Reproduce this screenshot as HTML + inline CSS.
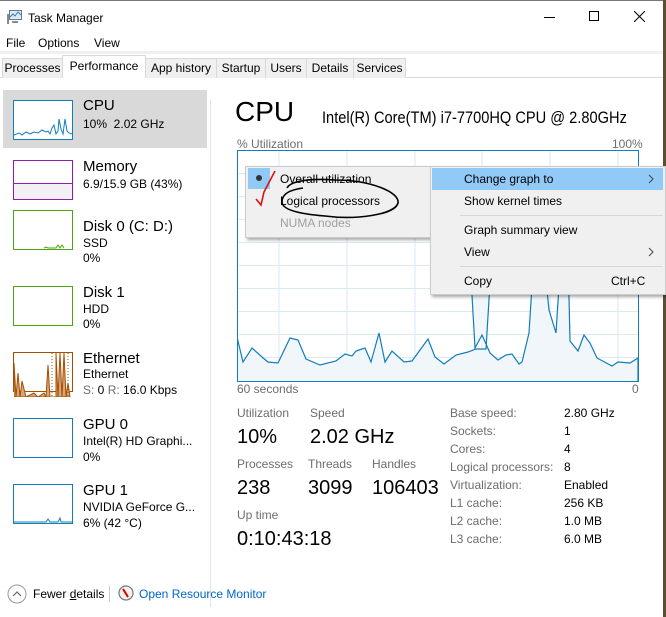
<!DOCTYPE html>
<html><head><meta charset="utf-8"><style>
*{margin:0;padding:0;box-sizing:border-box}
body{width:666px;height:617px;overflow:hidden;background:#fff;font-family:"Liberation Sans",sans-serif;color:#000;position:relative}
.a{position:absolute;white-space:nowrap}
.s12{font-size:12px}
.g{color:#6d6d6d}
.tab{position:absolute;top:58px;height:20px;border:1px solid #d9d9d9;border-bottom:none;background:#f0f0f0;font-size:12px;line-height:18px;text-align:center}
.th{position:absolute;left:13px;width:60px;height:40px;border:1px solid #117dbb;background:#fff}
.nm{position:absolute;left:83px;font-size:15px}
.sb{position:absolute;left:83px;font-size:12px;line-height:15px}
.lbl{position:absolute;font-size:12px;color:#6d6d6d}
.val{position:absolute;font-size:20px}
.mi{position:absolute;font-size:12px}
</style></head><body>
<div class="a" style="left:0;top:0;width:666px;height:1px;background:#777"></div>
<svg class="a" style="left:7px;top:10px" width="16" height="14"><rect x="2.5" y="0.5" width="12" height="9" fill="#dfe9f2" stroke="#6a7a8a"/><polyline points="3,7 6,4 8,6 11,2 14,5" fill="none" stroke="#3a78c0"/><rect x="0" y="4" width="2" height="10" fill="#8a8a8a"/><rect x="5" y="11" width="6" height="2" fill="#8a8a8a"/></svg>
<div class="a s12" style="left:28px;top:11px">Task Manager</div>
<div class="a" style="left:544px;top:17px;width:11px;height:1px;background:#000"></div>
<div class="a" style="left:589px;top:11px;width:10px;height:10px;border:1px solid #000"></div>
<svg class="a" style="left:634px;top:11px" width="11" height="11"><path d="M0 0L11 11M11 0L0 11" stroke="#000" stroke-width="1"/></svg>
<div class="a s12" style="left:6px;top:36px">File</div>
<div class="a s12" style="left:38px;top:36px">Options</div>
<div class="a s12" style="left:94px;top:36px">View</div>
<div class="a" style="left:0;top:51px;width:666px;height:3px;background:#f0f0f0"></div>
<div class="a" style="left:0;top:77px;width:663px;height:1px;background:#d9d9d9"></div>
<div class="tab" style="left:2px;width:61px">Processes</div>
<div class="tab" style="left:62px;width:84px;top:55px;height:23px;background:#fff;z-index:2;line-height:20px">Performance</div>
<div class="tab" style="left:145px;width:72px">App history</div>
<div class="tab" style="left:216px;width:50px">Startup</div>
<div class="tab" style="left:265px;width:42px">Users</div>
<div class="tab" style="left:306px;width:48px">Details</div>
<div class="tab" style="left:353px;width:53px">Services</div>
<div class="a" style="left:3px;top:90px;width:204px;height:58px;background:#d9d9d9"></div>
<div class="a" style="left:210px;top:100px;width:1px;height:507px;background:#e3e3e3"></div>
<div class="th" style="top:100px"><svg width="58" height="38" style="position:absolute;left:0;top:0"><polyline points="0,34 5,32 8,34 12,31 16,33 20,31 24,32 28,29 32,31 34,30 36,33 38,27 40,24 42,33 44,30 45,18 47,28 49,33 51,18 53,30 55,32 58,33" fill="none" stroke="#117dbb"/></svg></div>
<div class="nm" style="top:97px">CPU</div>
<div class="sb" style="top:117px">10%&nbsp; 2.02 GHz</div>
<div class="th" style="top:160px;border-color:#8e1dac"><div style="position:absolute;left:0;top:22px;width:58px;height:16px;background:#f2f0f4;border-top:1px solid #8e1dac"></div></div>
<div class="nm" style="top:158px">Memory</div>
<div class="sb" style="top:177px">6.9/15.9 GB (43%)</div>
<div class="th" style="top:210px;border-color:#4da60c"><svg width="58" height="38" style="position:absolute"><polyline points="30,37 32,36 34,37 42,37 44,34 46,37 48,34 50,37" fill="none" stroke="#4da60c"/></svg></div>
<div class="nm" style="top:218px">Disk 0 (C: D:)</div>
<div class="sb" style="top:236px">SSD</div>
<div class="sb" style="top:251px">0%</div>
<div class="th" style="top:286px;border-color:#4da60c"></div>
<div class="nm" style="top:284px">Disk 1</div>
<div class="sb" style="top:302px">HDD</div>
<div class="sb" style="top:317px">0%</div>
<div class="th" style="top:352px;border-color:#a74f01"><svg width="58" height="44" style="position:absolute"><path d="M0 44L0 10L2 44 4 20 6 44 8 28 10 36 12 44 20 40 24 44 30 40 32 44 34 12 36 44 42 44 42 0 44 44 46 0 48 44 50 0 52 44 54 30 56 44Z" fill="#d7a57a" stroke="#a74f01"/><path d="M38 0V44M54 0V44" stroke="#a74f01" stroke-dasharray="1,2"/></svg></div>
<div class="nm" style="top:350px">Ethernet</div>
<div class="sb" style="top:367px">Ethernet</div>
<div class="sb" style="top:383px"><span class="g">S:</span> 0 <span class="g">R:</span> 16.0 Kbps</div>
<div class="th" style="top:418px"></div>
<div class="nm" style="top:416px">GPU 0</div>
<div class="sb" style="top:434px">Intel(R) HD Graphi...</div>
<div class="sb" style="top:450px">0%</div>
<div class="th" style="top:484px"><svg width="58" height="38" style="position:absolute"><polyline points="0,37 32,37 34,34 36,37 44,37 46,33 47,37 58,37" fill="none" stroke="#117dbb"/></svg></div>
<div class="nm" style="top:482px">GPU 1</div>
<div class="sb" style="top:500px">NVIDIA GeForce G...</div>
<div class="sb" style="top:516px">6% (42 °C)</div>
<div class="a" style="left:235px;top:96px;font-size:28px">CPU</div>
<div class="a" style="left:322px;top:108px;font-size:17px;transform:scaleX(0.86);transform-origin:0 0">Intel(R) Core(TM) i7-7700HQ CPU @ 2.80GHz</div>
<div class="a s12 g" style="left:237px;top:137px">% Utilization</div>
<div class="a s12 g" style="left:612px;top:137px">100%</div>
<svg class="a" style="left:237px;top:150px" width="402" height="232">
<g stroke="#d9eaf4" stroke-width="1">
<path d="M42 0V232M110 0V232M178 0V232M245 0V232M313 0V232M381 0V232"/>
<path d="M0 23.5H402M0 46.5H402M0 69.5H402M0 92.5H402M0 115.5H402M0 138.5H402M0 161.5H402M0 184.5H402M0 207.5H402"/>
</g>
<path d="M0 187L6 212 15 198 25 207 31 212 41 213 53 188 61 190 69 209 83 215 99 211 108 204 115 206 119 201 128 198 134 212 142 183 148 212 155 201 167 212 175 211 191 189 198 207 207 214 219 205 231 202 239 199 249 199 255 100 229 40 238 198 245 185 253 203 261 210 269 205 275 204 282 214 285 212 292 183 296 120 300 60 308 120 312 160 319 183 323 120 330 60 333 191 341 201 347 185 353 193 360 208 375 216 381 212 393 213 401 208 401 232 0 232Z" fill="#f1f6fa" stroke="#117dbb" stroke-width="1.2"/>
<rect x="0.5" y="0.5" width="401" height="231" fill="none" stroke="#117dbb"/>
</svg>
<div class="a s12 g" style="left:237px;top:382px">60 seconds</div>
<div class="a s12 g" style="left:632px;top:382px">0</div>
<div class="lbl" style="left:237px;top:406px">Utilization</div>
<div class="lbl" style="left:310px;top:406px">Speed</div>
<div class="val" style="left:237px;top:426px">10%</div>
<div class="val" style="left:310px;top:426px">2.02 GHz</div>
<div class="lbl" style="left:237px;top:457px">Processes</div>
<div class="lbl" style="left:308px;top:457px">Threads</div>
<div class="lbl" style="left:372px;top:457px">Handles</div>
<div class="val" style="left:237px;top:477px">238</div>
<div class="val" style="left:308px;top:477px">3099</div>
<div class="val" style="left:372px;top:477px">106403</div>
<div class="lbl" style="left:237px;top:508px">Up time</div>
<div class="val" style="left:237px;top:528px">0:10:43:18</div>
<div class="lbl" style="left:450px;top:404px;line-height:18px">Base speed:<br>Sockets:<br>Cores:<br>Logical processors:<br>Virtualization:<br>L1 cache:<br>L2 cache:<br>L3 cache:</div>
<div class="a s12" style="left:564px;top:404px;line-height:18px">2.80 GHz<br>1<br>4<br>8<br>Enabled<br>256 KB<br>1.0 MB<br>6.0 MB</div>
<svg class="a" style="left:7px;top:584px" width="20" height="20"><circle cx="10" cy="10" r="9" fill="none" stroke="#999"/><path d="M6 12L10 8 14 12" fill="none" stroke="#666" stroke-width="1.2"/></svg>
<div class="a s12" style="left:33px;top:587px">Fewer <u>d</u>etails</div>
<div class="a" style="left:109px;top:586px;width:1px;height:16px;background:#ccc"></div>
<svg class="a" style="left:118px;top:585px" width="16" height="16"><circle cx="8" cy="8" r="7" fill="#f4f0ec" stroke="#777" stroke-width="1.2"/><path d="M5 4L10 12" stroke="#c00" stroke-width="2"/></svg>
<div class="a s12" style="left:139px;top:587px;color:#0066cc">Open Resource Monitor</div>
<div class="a" style="left:663px;top:0;width:3px;height:617px;background:#5a5030"></div>
<div class="a" style="left:245px;top:166px;width:188px;height:72px;background:#f0f0f0;border:1px solid #ccc;box-shadow:2px 2px 3px rgba(0,0,0,.35)"></div>
<div class="a" style="left:248px;top:168px;width:22px;height:21px;background:#91c9f7"></div>
<div class="a" style="left:256px;top:175px;width:6px;height:6px;border-radius:50%;background:#333"></div>
<div class="mi" style="left:280px;top:172px">Overall utilization</div>
<div class="mi" style="left:280px;top:194px">Logical processors</div>
<div class="mi" style="left:280px;top:216px;color:#a0a0a0">NUMA nodes</div>
<div class="a" style="left:430px;top:166px;width:236px;height:129px;background:#f0f0f0;border:1px solid #ccc;box-shadow:2px 2px 3px rgba(0,0,0,.35)"></div>
<div class="a" style="left:432px;top:168px;width:231px;height:22px;background:#91c9f7"></div>
<div class="mi" style="left:464px;top:172px">Change graph to</div>
<div class="mi" style="left:464px;top:194px">Show kernel times</div>
<div class="a" style="left:460px;top:215px;width:203px;height:1px;background:#d7d7d7"></div>
<div class="mi" style="left:464px;top:223px">Graph summary view</div>
<div class="mi" style="left:464px;top:245px">View</div>
<div class="a" style="left:460px;top:266px;width:203px;height:1px;background:#d7d7d7"></div>
<div class="mi" style="left:464px;top:274px">Copy</div>
<div class="mi" style="left:611px;top:274px">Ctrl+C</div>
<svg class="a" style="left:648px;top:174px" width="6" height="10"><path d="M1 1L5 5 1 9" fill="none" stroke="#444"/></svg>
<svg class="a" style="left:648px;top:247px" width="6" height="10"><path d="M1 1L5 5 1 9" fill="none" stroke="#444"/></svg>
<svg class="a" style="left:245px;top:168px" width="170" height="60"><path d="M30 3L19 24 16 37 11 31" fill="none" stroke="#e01010" stroke-width="1.6"/><path d="M42 20C45 14 60 10 90 12C125 12 155 24 153 35C150 47 110 52 80 48C55 46 37 42 37 34C37 26 44 22 58 20" fill="none" stroke="#000" stroke-width="1.6"/></svg>
</body></html>
